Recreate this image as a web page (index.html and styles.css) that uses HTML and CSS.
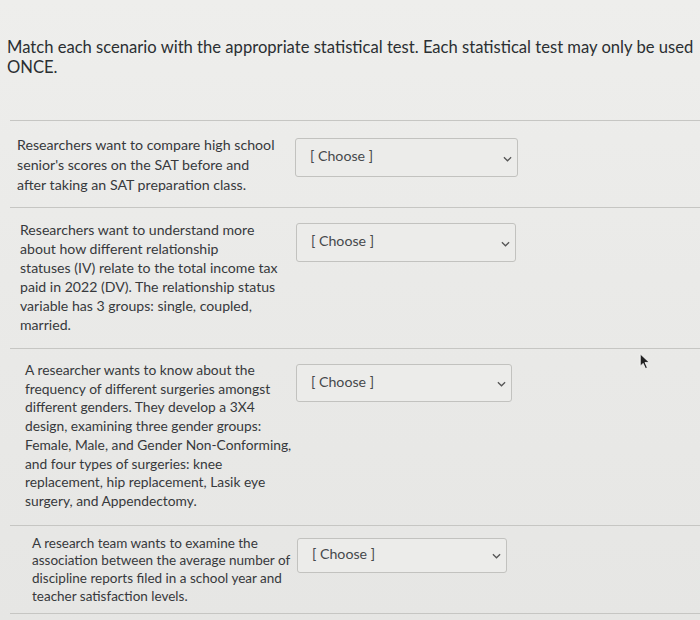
FILE: index.html
```html
<!DOCTYPE html>
<html lang="en">
<head>
<meta charset="utf-8">
<title>Matching question</title>
<link rel="stylesheet" href="styles.css">
</head>
<body>
<div class="page">
  <p class="prompt">Match each scenario with the appropriate statistical test. Each statistical test may only be used ONCE.</p>
  <div class="list">
    <div class="row r1">
      <div class="scenario">Researchers want to compare high school<br>senior's scores on the SAT before and<br>after taking an SAT preparation class.</div>
      <div class="select s1"><span>[ Choose ]</span><svg class="chev" viewBox="0 0 10 6" width="9" height="6"><path d="M1 1 L5 5 L9 1" fill="none" stroke="#555" stroke-width="1.4"/></svg></div>
    </div>
    <div class="row r2">
      <div class="scenario">Researchers want to understand more<br>about how different relationship<br>statuses (IV) relate to the total income tax<br>paid in 2022 (DV). The relationship status<br>variable has 3 groups: single, coupled,<br>married.</div>
      <div class="select s2"><span>[ Choose ]</span><svg class="chev" viewBox="0 0 10 6" width="9" height="6"><path d="M1 1 L5 5 L9 1" fill="none" stroke="#555" stroke-width="1.4"/></svg></div>
    </div>
    <div class="row r3">
      <div class="scenario">A researcher wants to know about the<br>frequency of different surgeries amongst<br>different genders. They develop a 3X4<br>design, examining three gender groups:<br>Female, Male, and Gender Non-Conforming,<br>and four types of surgeries: knee<br>replacement, hip replacement, Lasik eye<br>surgery, and Appendectomy.</div>
      <div class="select s3"><span>[ Choose ]</span><svg class="chev" viewBox="0 0 10 6" width="9" height="6"><path d="M1 1 L5 5 L9 1" fill="none" stroke="#555" stroke-width="1.4"/></svg></div>
    </div>
    <div class="row r4">
      <div class="scenario">A research team wants to examine the<br>association between the average number of<br>discipline reports filed in a school year and<br>teacher satisfaction levels.</div>
      <div class="select s4"><span>[ Choose ]</span><svg class="chev" viewBox="0 0 10 6" width="9" height="6"><path d="M1 1 L5 5 L9 1" fill="none" stroke="#555" stroke-width="1.4"/></svg></div>
    </div>
  </div>
  <svg class="cursor" viewBox="0 0 12 18" width="12" height="17"><path d="M1 1 L1 14 L4 11 L6.5 16.5 L8.5 15.5 L6 10 L10.5 10 Z" fill="#222" stroke="#fff" stroke-width="0.8"/></svg>
</div>
</body>
</html>
```

FILE: styles.css
```css
html, body {
  margin: 0;
  padding: 0;
}
body {
  background: #e9e9e7;
  font-family: Lato, "Open Sans", sans-serif;
  color: #3a3d40;
}
.page {
  position: relative;
  width: 700px;
  height: 620px;
  overflow: hidden;
  background: linear-gradient(180deg, #eeeeec 0%, #eaeae8 45%, #e6e6e4 100%);
}
.prompt {
  margin: 0;
  padding: 37px 4px 0 7px;
  font-size: 16.6px;
  line-height: 20px;
  color: #2b2f32;
}
.list {
  margin: 43px 0 0 10px;
  border-top: 1px solid #c6c6c3;
}
.row {
  display: flex;
  align-items: flex-start;
  gap: 0;
  border-bottom: 1px solid #c6c6c3;
}
.scenario {
  white-space: nowrap;
  color: #37393c;
}
.r1 { padding: 14px 0 12px 7px; }
.r1 .scenario { width: 278px; font-size: 14.2px; line-height: 20px; }
.r2 { padding: 12px 0 14px 10px; }
.r2 .scenario { width: 276px; font-size: 14.1px; line-height: 19px; }
.r3 { padding: 12px 0 14px 15px; }
.r3 .scenario { width: 271px; font-size: 13.8px; line-height: 18.7px; }
.r4 { padding: 9px 0 7px 22px; }
.r4 .scenario { width: 265px; font-size: 13.5px; line-height: 17.8px; }
.select {
  margin-top: 3px;
  height: 39px;
  box-sizing: border-box;
  border: 1px solid #c2c2bf;
  border-radius: 3px;
  background: #ececea;
  display: flex;
  align-items: center;
  justify-content: space-between;
  padding: 0 5px 0 14px;
  font-size: 14.2px;
  color: #46494c;
}
.select span { margin-top: -4px; }
.s1 { width: 223px; }
.s2 { width: 220px; }
.s3 { width: 216px; height: 38px; }
.s4 { width: 210px; height: 35px; }
.chev { margin-top: 2px; }
.cursor {
  position: absolute;
  left: 639px;
  top: 353px;
}
```
